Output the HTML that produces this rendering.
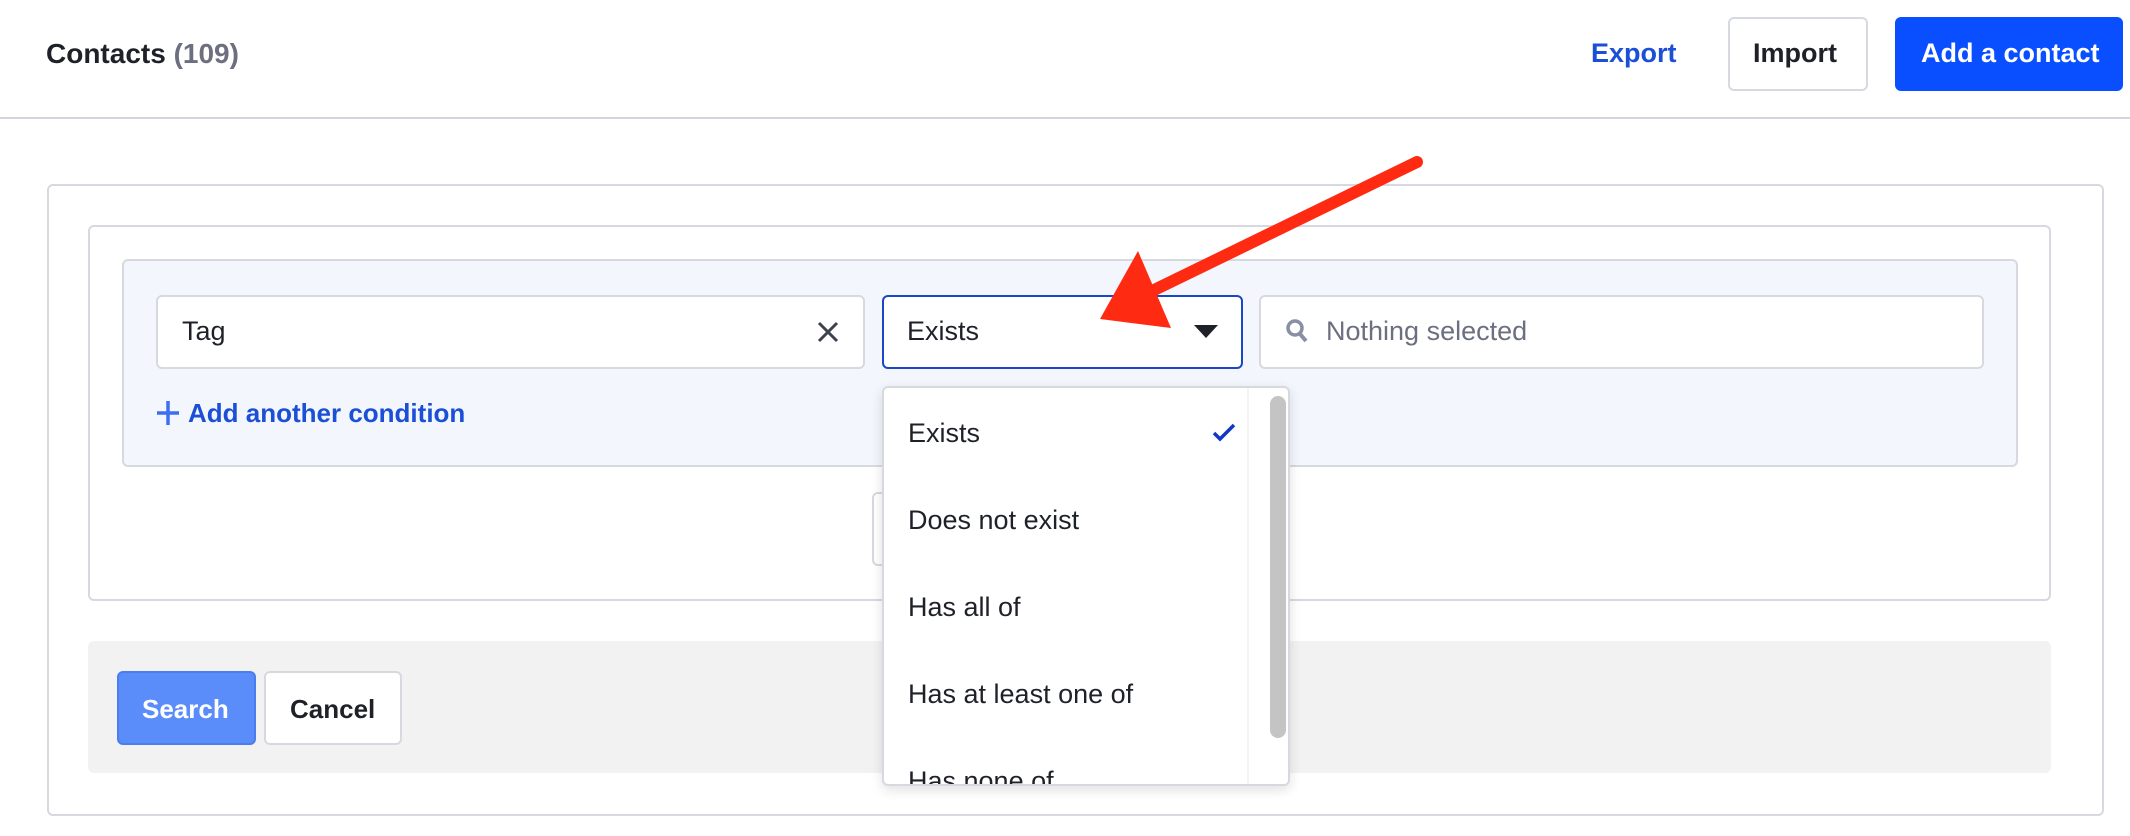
<!DOCTYPE html>
<html><head><style>
*{box-sizing:border-box;margin:0;padding:0}
body{width:2130px;height:836px;background:#fff;font-family:"Liberation Sans",sans-serif;position:relative;overflow:hidden;color:#1f2129}
.a{position:absolute}
.box{position:absolute;border:2px solid #d7d9e0;border-radius:6px;background:#fff}
.t{position:absolute;white-space:nowrap}
</style></head><body>
<div class="t" style="left:46px;top:38px;font-size:28px;font-weight:bold;color:#1f2129">Contacts <span style="color:#6b6f80">(109)</span></div>
<div class="t" style="left:1591px;top:38px;font-size:27px;font-weight:bold;color:#1a4fd6">Export</div>
<div class="box" style="left:1728px;top:17px;width:140px;height:74px;"></div>
<div class="t" style="left:1753px;top:38px;font-size:27px;font-weight:bold;color:#1f2129">Import</div>
<div class="a" style="left:1895px;top:17px;width:228px;height:74px;background:#0a4fff;border-radius:6px"></div>
<div class="t" style="left:1921px;top:38px;font-size:27px;font-weight:bold;color:#fff">Add a contact</div>
<div class="a" style="left:0;top:117px;width:2130px;height:2px;background:#d3d5de"></div>

<div class="box" style="left:47px;top:184px;width:2057px;height:632px;"></div>
<div class="box" style="left:88px;top:225px;width:1963px;height:376px;"></div>
<div class="box" style="left:122px;top:259px;width:1896px;height:208px;background:#f3f6fd"></div>
<div class="box" style="left:156px;top:295px;width:709px;height:74px;"></div>
<div class="t" style="left:182px;top:316px;font-size:27px">Tag</div>
<svg class="a" style="left:816px;top:320px" width="24" height="24" viewBox="0 0 24 24"><path d="M3 3L21 21M21 3L3 21" stroke="#3e4150" stroke-width="3"/></svg>
<div class="box" style="left:882px;top:295px;width:361px;height:74px;border-color:#1848c8"></div>
<div class="t" style="left:907px;top:316px;font-size:27px">Exists</div>
<svg class="a" style="left:1194px;top:325px" width="24" height="14"><path d="M0 0H24L12 13Z" fill="#1f2129"/></svg>
<div class="box" style="left:1259px;top:295px;width:725px;height:74px;"></div>
<svg class="a" style="left:1285px;top:318px" width="24" height="26" viewBox="0 0 24 26"><circle cx="10" cy="10" r="7" fill="none" stroke="#8a8fa3" stroke-width="3.5"/><path d="M15 16L21 23" stroke="#8a8fa3" stroke-width="4"/></svg>
<div class="t" style="left:1326px;top:316px;font-size:27px;color:#6b6f80">Nothing selected</div>
<svg class="a" style="left:156px;top:400px" width="24" height="26"><path d="M12 1V25M1 13H23" stroke="#3d6ef0" stroke-width="3.5"/></svg>
<div class="t" style="left:188px;top:398px;font-size:26px;font-weight:bold;color:#1a4fd6">Add another condition</div>
<div class="box" style="left:872px;top:492px;width:80px;height:74px;"></div>

<div class="a" style="left:88px;top:641px;width:1963px;height:132px;background:#f2f2f2;border-radius:6px"></div>
<div class="a" style="left:117px;top:671px;width:139px;height:74px;background:#5a8dfa;border-radius:6px;border:2px solid #4a7ef0"></div>
<div class="t" style="left:142px;top:694px;font-size:26px;font-weight:bold;color:#fff">Search</div>
<div class="box" style="left:264px;top:671px;width:138px;height:74px;"></div>
<div class="t" style="left:290px;top:694px;font-size:26px;font-weight:bold">Cancel</div>

<div class="box" style="left:882px;top:386px;width:408px;height:400px;box-shadow:0 4px 12px rgba(0,0,0,.12);overflow:hidden">
<div class="a" style="left:363px;top:0;width:2px;height:400px;background:#f3f3f3"></div>
<div class="a" style="left:386px;top:8px;width:16px;height:342px;background:#c4c4c4;border-radius:8px"></div>
<div class="t" style="left:24px;top:30px;font-size:27px">Exists</div>
<svg class="a" style="left:328px;top:34px" width="24" height="20"><path d="M2 11L8 17L22 3" fill="none" stroke="#1238c4" stroke-width="3.5"/></svg>
<div class="t" style="left:24px;top:117px;font-size:27px">Does not exist</div>
<div class="t" style="left:24px;top:204px;font-size:27px">Has all of</div>
<div class="t" style="left:24px;top:291px;font-size:27px">Has at least one of</div>
<div class="t" style="left:24px;top:378px;font-size:27px">Has none of</div>
</div>

<svg class="a" style="left:0;top:0" width="2130" height="836"><path d="M1417 162L1150 292" stroke="#ff2a12" stroke-width="12" stroke-linecap="round"/><path d="M1100 319L1138 251L1171 328Z" fill="#ff2a12"/></svg>
</body></html>
